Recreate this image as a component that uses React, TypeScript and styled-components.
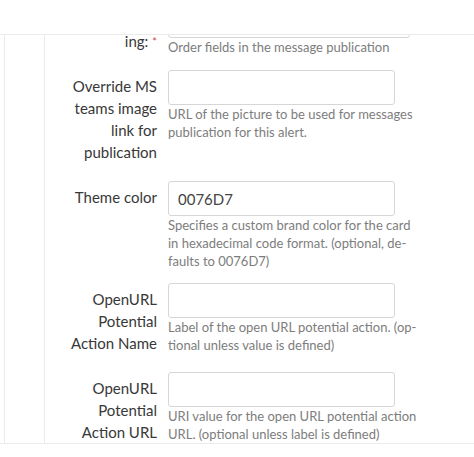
import styled, { createGlobalStyle } from 'styled-components'

const GlobalStyle = createGlobalStyle`
  html, body {
    margin: 0;
    padding: 0;
    background: #fff;
  }
  body {
    font-family: Lato, "Liberation Sans", sans-serif;
    color: #333;
  }
`

const Page = styled.div`
  padding-top: 34px;
  width: 474px;
`

const Sheet = styled.div`
  border-top: 1px solid #ebebeb;
  border-bottom: 1px solid #ebebeb;
  height: 408px;
  overflow: hidden;
  display: flex;
`

const Rail = styled.div`
  margin-left: 4px;
  width: 39px;
  border-left: 1px solid #ebebeb;
  border-right: 1px solid #ebebeb;
  flex-shrink: 0;
`

const Form = styled.div`
  flex: 1;
  display: flex;
  flex-direction: column;
  margin-top: -32px;
`

const Row = styled.div`
  display: flex;
  align-items: flex-start;
  gap: 11px;
  margin-bottom: 13px;
`

const Label = styled.label`
  width: 112px;
  flex-shrink: 0;
  text-align: right;
  white-space: nowrap;
  font-size: 15px;
  line-height: 22px;
  padding-top: 5px;
  padding-bottom: 5px;
  color: #383838;
`

const Required = styled.span`
  color: #d0463f;
  font-size: 11px;
  vertical-align: top;
  position: relative;
  top: 1px;
  margin-left: 4px;
`

const Control = styled.div`
  display: flex;
  flex-direction: column;
  width: 260px;
`

const Input = styled.input<{ $wide?: boolean }>`
  box-sizing: border-box;
  width: ${(p) => (p.$wide ? '242px' : '227px')};
  height: 35px;
  border: 1px solid #d6d6d6;
  border-radius: 3px;
  padding: 0 9px;
  font-family: inherit;
  font-size: 15px;
  color: #444;
  background: #fff;
  outline: none;
`

const Help = styled.div`
  font-size: 13px;
  line-height: 18px;
  color: #7d7d7d;
  white-space: nowrap;
`

type Field = {
  label: React.ReactNode
  value?: string
  help: string[]
  wide?: boolean
}

const fields: Field[] = [
  {
    label: (
      <>
        Field order-
        <br />
        ing:<Required>*</Required>
      </>
    ),
    help: ['Order fields in the message publication'],
    wide: true,
  },
  {
    label: (
      <>
        Override MS
        <br />
        teams image
        <br />
        link for
        <br />
        publication
      </>
    ),
    help: ['URL of the picture to be used for messages', 'publication for this alert.'],
  },
  {
    label: 'Theme color',
    value: '0076D7',
    help: [
      'Specifies a custom brand color for the card',
      'in hexadecimal code format. (optional, de-',
      'faults to 0076D7)',
    ],
  },
  {
    label: (
      <>
        OpenURL
        <br />
        Potential
        <br />
        Action Name
      </>
    ),
    help: ['Label of the open URL potential action. (op-', 'tional unless value is defined)'],
  },
  {
    label: (
      <>
        OpenURL
        <br />
        Potential
        <br />
        Action URL
      </>
    ),
    help: ['URI value for the open URL potential action', 'URL. (optional unless label is defined)'],
  },
]

function App() {
  return (
    <>
      <GlobalStyle />
      <Page>
        <Sheet>
          <Rail />
          <Form>
            {fields.map((f, i) => (
              <Row key={i}>
                <Label>{f.label}</Label>
                <Control>
                  <Input $wide={f.wide} defaultValue={f.value ?? ''} />
                  <Help>
                    {f.help.map((line, j) => (
                      <div key={j}>{line}</div>
                    ))}
                  </Help>
                </Control>
              </Row>
            ))}
          </Form>
        </Sheet>
      </Page>
    </>
  )
}

export default App
